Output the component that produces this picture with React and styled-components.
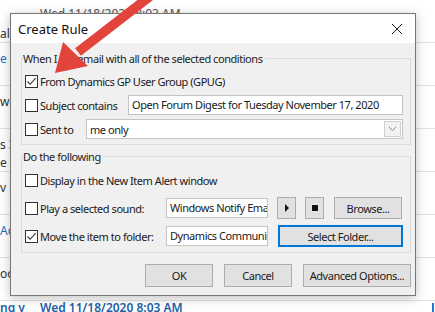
import React from 'react'
import styled, {createGlobalStyle} from 'styled-components'

const GlobalStyle = createGlobalStyle`
  html, body {
    margin: 0;
    padding: 0;
    background: #ffffff;
    overflow: hidden;
  }
  body {
    font-family: "Noto Sans", "Liberation Sans", sans-serif;
    color: #1a1a1a;
  }
`

const inbox = [
    {first: '', second: 'al'},
    {first: 'e c', firstBlue: true, second: ''},
    {first: 'wo', second: ''},
    {first: 's 3', second: 'e a'},
    {first: 'v l', second: ''},
    {first: 'Ac', firstBlue: true, second: ''},
    {first: 'oo', second: ''},
]

function Check({checked}) {
    return (
        <Box>
            {checked && (
                <svg width="11" height="11" viewBox="0 0 11 11">
                    <polyline points="1.5,5.5 4.2,8.3 9.6,2.2" fill="none" stroke="#333" strokeWidth="1.1"/>
                </svg>
            )}
        </Box>
    )
}

function App() {
    return (
        <Stage>
            <GlobalStyle/>
            <Backdrop>
                <TopDate>Wed 11/18/2020 8:03 AM</TopDate>
                {inbox.map((row, index) => (
                    <MailRow key={index}>
                        <Snippet blue={row.firstBlue}>{row.first}</Snippet>
                        <Snippet>{row.second}</Snippet>
                    </MailRow>
                ))}
                <LastRow>
                    <Sender>ng y</Sender>
                    <Stamp>Wed 11/18/2020 8:03 AM</Stamp>
                </LastRow>
                <ScrollMark/>
            </Backdrop>

            <Dialog>
                <TitleBar>
                    <Title>Create Rule</Title>
                    <CloseBtn>
                        <svg width="12" height="12" viewBox="0 0 12 12">
                            <path d="M1 1 L11 11 M11 1 L1 11" stroke="#222" strokeWidth="1"/>
                        </svg>
                    </CloseBtn>
                </TitleBar>
                <Body>
                    <Group>
                        <Legend>When I get email with all of the selected conditions</Legend>
                        <Row>
                            <Check checked/>
                            <Label>From Dynamics GP User Group (GPUG)</Label>
                        </Row>
                        <Row>
                            <Check/>
                            <Label width={88}>Subject contains</Label>
                            <TextBox>Open Forum Digest for Tuesday November 17, 2020</TextBox>
                        </Row>
                        <Row>
                            <Check/>
                            <Label width={46}>Sent to</Label>
                            <Combo>
                                <ComboText>me only</ComboText>
                                <DropBtn>
                                    <svg width="9" height="6" viewBox="0 0 9 6">
                                        <polyline points="1,1 4.5,4.5 8,1" fill="none" stroke="#888" strokeWidth="1"/>
                                    </svg>
                                </DropBtn>
                            </Combo>
                        </Row>
                    </Group>

                    <Group second>
                        <Legend>Do the following</Legend>
                        <ActionRow>
                            <Check/>
                            <Label>Display in the New Item Alert window</Label>
                        </ActionRow>
                        <ActionRow>
                            <Check/>
                            <Label width={126}>Play a selected sound:</Label>
                            <TextBox fixed>Windows Notify Email</TextBox>
                            <IconButton>
                                <svg width="6" height="8" viewBox="0 0 6 8"><polygon points="1,0 5,4 1,8" fill="#111"/></svg>
                            </IconButton>
                            <IconButton>
                                <svg width="6" height="6" viewBox="0 0 6 6"><rect width="6" height="6" fill="#111"/></svg>
                            </IconButton>
                            <Button width={68}>Browse...</Button>
                        </ActionRow>
                        <ActionRow>
                            <Check checked/>
                            <Label width={126}>Move the item to folder:</Label>
                            <TextBox fixed>Dynamics Community</TextBox>
                            <Button width={125} focused>Select Folder...</Button>
                        </ActionRow>
                    </Group>

                    <Footer>
                        <Button width={68} tall>OK</Button>
                        <Button width={68} tall>Cancel</Button>
                        <Button width={108} tall>Advanced Options...</Button>
                    </Footer>
                </Body>
            </Dialog>

            <Arrow width="435" height="312" viewBox="0 0 435 312">
                <line x1="153" y1="-6" x2="78" y2="52" stroke="#e2433b" strokeWidth="9.5"/>
                <polygon points="55,73 63,42 88,66" fill="#e2433b"/>
            </Arrow>
        </Stage>
    )
}

export default App

const Stage = styled.div`
position: relative;
width: 435px;
height: 312px;
overflow: hidden;
`

const Backdrop = styled.div`
position: relative;
display: flex;
flex-direction: column;
width: 435px;
height: 312px;
font-size: 12px;
color: #333;
`

const TopDate = styled.div`
height: 0;
padding-left: 40px;
transform: translateY(6px);
line-height: 16px;
white-space: nowrap;
color: #555;
`

const MailRow = styled.div`
display: flex;
flex-direction: column;
justify-content: center;
gap: 2px;
height: 43px;
box-sizing: border-box;
padding-top: 8px;
border-bottom: 1px solid #e3e3e3;
`

const Snippet = styled.div`
height: 16px;
line-height: 16px;
white-space: nowrap;
color: ${props => props.blue ? '#1b6ec2' : '#333'};
`

const LastRow = styled.div`
display: flex;
align-items: center;
gap: 15px;
height: 16px;
margin-top: -2px;
font-weight: 600;
color: #1d5fa8;
`

const Sender = styled.span`
width: 25px;
white-space: nowrap;
`

const Stamp = styled.span`
white-space: nowrap;
`

const ScrollMark = styled.div`
position: absolute;
right: 1px;
bottom: 0;
width: 2px;
height: 9px;
background: #1d78d0;
`

const Dialog = styled.div`
position: absolute;
left: 10px;
top: 13px;
width: 406px;
height: 283px;
box-sizing: border-box;
display: flex;
flex-direction: column;
background: #f0f0f0;
border: 1px solid #777;
box-shadow: 0 2px 10px rgba(0,0,0,.25);
letter-spacing: -0.45px;
`

const TitleBar = styled.div`
display: flex;
align-items: center;
justify-content: space-between;
height: 29px;
padding: 0 12px 0 7px;
background: #ffffff;
`

const Title = styled.span`
font-size: 13px;
letter-spacing: 0;
color: #111;
`

const CloseBtn = styled.span`
display: flex;
align-items: center;
`

const Body = styled.div`
display: flex;
flex-direction: column;
padding: 8px 4px 0 10px;
`

const Group = styled.fieldset`
margin: ${props => props.second ? '4px 0 0' : '0'};
padding: ${props => props.second ? '5px 7px 5px 3px' : '3px 7px 3px 3px'};
border: 1px solid #dcdcdc;
min-width: 0;
`

const Legend = styled.legend`
padding: 0 2px 0 0;
margin-left: -2px;
font-size: 11px;
line-height: 15px;
color: #222;
`

const Row = styled.div`
display: flex;
align-items: center;
height: 24px;
font-size: 11px;
`

const ActionRow = styled(Row)`
height: 22px;
& + & {
    margin-top: 6px;
}
`

const Box = styled.span`
display: flex;
align-items: center;
justify-content: center;
flex: none;
width: 13px;
height: 13px;
box-sizing: border-box;
border: 1px solid #333;
background: #fff;
margin-right: 2px;
`

const Label = styled.span`
flex: none;
width: ${props => props.width ? props.width + 'px' : 'auto'};
white-space: nowrap;
color: #1a1a1a;
`

const TextBox = styled.div`
flex: ${props => props.fixed ? 'none' : '1'};
width: ${props => props.fixed ? '102px' : 'auto'};
height: 20px;
box-sizing: border-box;
border: 1px solid #c4c4c4;
background: #fff;
padding: 0 3px;
line-height: 18px;
white-space: nowrap;
overflow: hidden;
color: #1a1a1a;
`

const Combo = styled.div`
flex: 1;
display: flex;
align-items: center;
height: 20px;
box-sizing: border-box;
border: 1px solid #c4c4c4;
background: #fff;
padding-right: 1px;
`

const ComboText = styled.span`
flex: 1;
padding-left: 3px;
`

const DropBtn = styled.span`
display: flex;
align-items: center;
justify-content: center;
width: 17px;
height: 16px;
box-sizing: border-box;
border: 1px solid #cfcfcf;
background: #f2f2f2;
`

const IconButton = styled.div`
display: flex;
align-items: center;
justify-content: center;
flex: none;
width: 19px;
height: 22px;
box-sizing: border-box;
margin-left: 9px;
border: 1px solid #adadad;
background: #e1e1e1;
`

const Button = styled.div`
display: flex;
align-items: center;
justify-content: center;
flex: none;
width: ${props => props.width}px;
height: ${props => props.tall ? 23 : 22}px;
box-sizing: border-box;
margin-left: ${props => props.tall ? 11 : 10}px;
border: 1px solid ${props => props.focused ? '#0078d7' : '#adadad'};
box-shadow: ${props => props.focused ? 'inset 0 0 0 1px #0078d7' : 'none'};
background: #e1e1e1;
font-size: 11px;
color: #1a1a1a;
white-space: nowrap;
`

const Footer = styled.div`
display: flex;
justify-content: flex-end;
margin-top: 11px;
`

const Arrow = styled.svg`
position: absolute;
left: 0;
top: 0;
pointer-events: none;
`
